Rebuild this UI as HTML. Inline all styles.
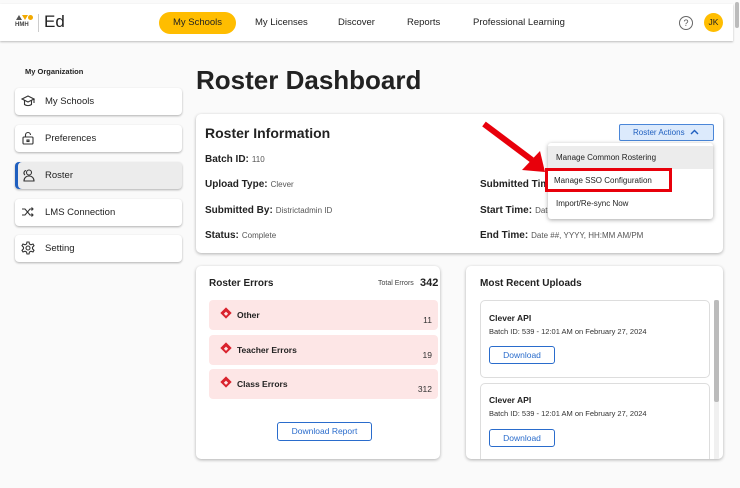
<!DOCTYPE html>
<html><head><meta charset="utf-8"><style>
*{box-sizing:border-box;margin:0;padding:0}
body{width:740px;height:488px;overflow:hidden;background:#fafafa;font-family:"Liberation Sans",sans-serif;color:#222;position:relative}
.a{position:absolute}
.card{position:absolute;background:#fff;border-radius:5px;box-shadow:0 1px 3px rgba(0,0,0,.3)}
.side{position:absolute;left:15px;width:167px;height:27px;background:#fff;border-radius:4px;box-shadow:0 1px 2px rgba(0,0,0,.3);font-size:9.5px}
.side span{position:absolute;left:30px;top:8px}
.side svg{position:absolute;left:6px;top:6px}
.lbl{position:absolute;font-size:10px;font-weight:bold}
.lbl i{font-style:normal;font-weight:normal;font-size:8px;color:#555;margin-left:3px}
.err{position:absolute;left:209px;width:229px;height:30px;background:#fde6e6;border-radius:4px;font-size:8.5px;font-weight:bold}
.err b{position:absolute;left:28px;top:10px}
.err i{position:absolute;right:6px;top:15px;font-style:normal;font-weight:normal;color:#333}
.err .d{position:absolute;left:13px;top:9px;width:8px;height:8px;background:#d9232e;transform:rotate(45deg)}
.err .d:after{content:"";position:absolute;left:2.5px;top:2.5px;width:3px;height:3px;background:#fde6e6}
.btn{position:absolute;border:1px solid #2a6ccc;border-radius:3px;color:#2a6ccc;font-size:8.5px;text-align:center;background:#fff}
</style></head><body>
<div class="a" style="left:0;top:4px;width:733px;height:37px;background:#fff;box-shadow:0 1px 2px rgba(0,0,0,.25)"></div>
<div class="a" style="left:735px;top:2px;width:4px;height:26px;background:#bbb;border-radius:2px"></div>
<!-- logo -->
<div class="a" style="left:16px;top:15px;width:0;height:0;border-left:3px solid transparent;border-right:3px solid transparent;border-bottom:5px solid #555"></div>
<div class="a" style="left:22px;top:15px;width:0;height:0;border-left:3px solid transparent;border-right:3px solid transparent;border-top:5px solid #f2a900"></div>
<div class="a" style="left:28px;top:15px;width:5px;height:5px;border-radius:50%;background:#f2a900"></div>
<div class="a" style="left:15px;top:22px;font-size:6px;font-weight:bold;color:#444">HMH</div>
<div class="a" style="left:38px;top:14px;width:1px;height:18px;background:#ccc"></div>
<div class="a" style="left:44px;top:12px;font-size:17px;color:#222">Ed</div>
<div class="a" style="left:159px;top:12px;width:77px;height:22px;border-radius:11px;background:#ffbd00;font-size:9.5px;text-align:center;line-height:22px">My Schools</div>
<div class="a" style="left:255px;top:17px;font-size:9.5px">My Licenses</div>
<div class="a" style="left:338px;top:17px;font-size:9.5px">Discover</div>
<div class="a" style="left:407px;top:17px;font-size:9.5px">Reports</div>
<div class="a" style="left:473px;top:17px;font-size:9.5px">Professional Learning</div>
<div class="a" style="left:679px;top:16px;width:14px;height:14px;border:1px solid #666;border-radius:50%;font-size:9px;text-align:center;line-height:12px;color:#555">?</div>
<div class="a" style="left:704px;top:13px;width:19px;height:19px;border-radius:50%;background:#ffbd00;font-size:8.5px;text-align:center;line-height:19px">JK</div>
<!-- sidebar -->
<div class="a" style="left:25px;top:67px;font-size:7.5px;font-weight:bold">My Organization</div>
<div class="side" style="top:88px"><svg width="14" height="14" viewBox="0 0 14 14" fill="none" stroke="#333" stroke-width="1.1"><path d="M1 5l6-3 6 3-6 3z M3.5 6.5v4c2 1.5 5 1.5 7 0v-4 M13 5v4"/></svg><span>My Schools</span></div>
<div class="side" style="top:125px"><svg width="14" height="14" viewBox="0 0 14 14" fill="none" stroke="#333" stroke-width="1.1"><rect x="2" y="6" width="10" height="7" rx="1"/><path d="M4.5 6V4a2.5 2.5 0 0 1 5 0"/><rect x="6" y="9" width="2" height="1.5"/></svg><span>Preferences</span></div>
<div class="side" style="top:162px;background:#ececec;box-shadow:inset 3px 0 0 #1f5fbf,0 1px 2px rgba(0,0,0,.3)"><svg width="14" height="14" viewBox="0 0 14 14" fill="none" stroke="#333" stroke-width="1.1"><circle cx="8" cy="4.5" r="2.5"/><path d="M3 13c0-3 2-5 5-5s5 2 5 5z M5 2.5a2.5 2.5 0 0 0-1 4.5"/></svg><span>Roster</span></div>
<div class="side" style="top:199px"><svg width="14" height="14" viewBox="0 0 14 14" fill="none" stroke="#333" stroke-width="1.1"><path d="M1 4h3l5 6h3 M1 10h3l5-6h3 M10.5 2.5l1.5 1.5-1.5 1.5 M10.5 8.5l1.5 1.5-1.5 1.5"/></svg><span>LMS Connection</span></div>
<div class="side" style="top:235px"><svg width="14" height="14" viewBox="0 0 14 14" fill="none" stroke="#333" stroke-width="1.1"><circle cx="7" cy="7" r="2"/><path d="M6 1h2l.5 2 1.5.8 2-.8 1 1.7-1.5 1.5v1.6l1.5 1.5-1 1.7-2-.8-1.5.8L8 13H6l-.5-2L4 10.2l-2 .8-1-1.7 1.5-1.5V6.2L1 4.7l1-1.7 2 .8L5.5 3z"/></svg><span>Setting</span></div>
<!-- title -->
<div class="a" style="left:196px;top:65px;font-size:26px;font-weight:bold;color:#222">Roster Dashboard</div>
<!-- roster info -->
<div class="card" style="left:196px;top:114px;width:527px;height:139px"></div>
<div class="a" style="left:205px;top:125px;font-size:14px;font-weight:bold;color:#222">Roster Information</div>
<div class="lbl" style="left:205px;top:154px">Batch ID:<i>110</i></div>
<div class="lbl" style="left:205px;top:179px">Upload Type:<i>Clever</i></div>
<div class="lbl" style="left:205px;top:205px">Submitted By:<i>Districtadmin ID</i></div>
<div class="lbl" style="left:205px;top:230px">Status:<i>Complete</i></div>
<div class="lbl" style="left:480px;top:179px">Submitted Time:</div>
<div class="lbl" style="left:480px;top:205px">Start Time:<i>Date</i></div>
<div class="lbl" style="left:480px;top:230px">End Time:<i>Date ##, YYYY, HH:MM AM/PM</i></div>
<div class="a" style="left:619px;top:124px;width:95px;height:17px;background:#dceafc;border:1px solid #4a86d8;border-radius:2px;font-size:8px;color:#1f5fbf;line-height:15px;padding-left:13px">Roster Actions <svg width="9" height="6" viewBox="0 0 9 6" style="margin-left:3px"><path d="M1 5l3.5-3.5L8 5" fill="none" stroke="#1f5fbf" stroke-width="1.4"/></svg></div>
<div class="a" style="left:548px;top:143px;width:165px;height:76px;background:#fff;border-radius:3px;box-shadow:0 1px 4px rgba(0,0,0,.35)"></div>
<div class="a" style="left:548px;top:146px;width:165px;height:23px;background:#ececec"></div>
<div class="a" style="left:556px;top:153px;font-size:8px">Manage Common Rostering</div>
<div class="a" style="left:554px;top:176px;font-size:8px">Manage SSO Configuration</div>
<div class="a" style="left:556px;top:199px;font-size:8px">Import/Re-sync Now</div>
<div class="a" style="left:545px;top:168px;width:127px;height:24px;border:3px solid #e8000b"></div>
<svg class="a" style="left:470px;top:110px" width="80" height="70" viewBox="0 0 80 70"><path d="M14 14L62 50" stroke="#e8000b" stroke-width="6"/><path d="M75 62L52 60L70 41z" fill="#e8000b"/></svg>
<!-- roster errors -->
<div class="card" style="left:196px;top:266px;width:244px;height:193px"></div>
<div class="a" style="left:209px;top:278px;font-size:10px;font-weight:bold;color:#222">Roster Errors</div>
<div class="a" style="left:378px;top:280px;font-size:7px;color:#444">Total Errors</div>
<div class="a" style="left:420px;top:277px;font-size:11px;font-weight:bold">342</div>
<div class="err" style="top:300px"><div class="d"></div><b>Other</b><i>11</i></div>
<div class="err" style="top:335px"><div class="d"></div><b>Teacher Errors</b><i>19</i></div>
<div class="err" style="top:369px"><div class="d"></div><b>Class Errors</b><i>312</i></div>
<div class="btn" style="left:277px;top:422px;width:95px;height:19px;line-height:17px">Download Report</div>
<!-- uploads -->
<div class="card" style="left:466px;top:266px;width:257px;height:193px;overflow:hidden">
<div class="a" style="left:14px;top:12px;font-size:10px;font-weight:bold">Most Recent Uploads</div>
<div class="a" style="left:14px;top:34px;width:230px;height:78px;border:1px solid #ddd;border-radius:5px">
<div class="a" style="left:8px;top:12px;font-size:8.5px;font-weight:bold">Clever API</div>
<div class="a" style="left:8px;top:26px;font-size:7.5px;color:#333">Batch ID: 539 - 12:01 AM on February 27, 2024</div>
<div class="btn" style="left:8px;top:45px;width:66px;height:18px;line-height:16px">Download</div></div>
<div class="a" style="left:14px;top:117px;width:230px;height:90px;border:1px solid #ddd;border-radius:5px">
<div class="a" style="left:8px;top:11px;font-size:8.5px;font-weight:bold">Clever API</div>
<div class="a" style="left:8px;top:25px;font-size:7.5px;color:#333">Batch ID: 539 - 12:01 AM on February 27, 2024</div>
<div class="btn" style="left:8px;top:45px;width:66px;height:18px;line-height:16px">Download</div></div>
<div class="a" style="left:248px;top:34px;width:5px;height:160px;background:#f0f0f0"></div>
<div class="a" style="left:248px;top:34px;width:5px;height:102px;background:#bbb;border-radius:2px"></div>
</div>
</body></html>
